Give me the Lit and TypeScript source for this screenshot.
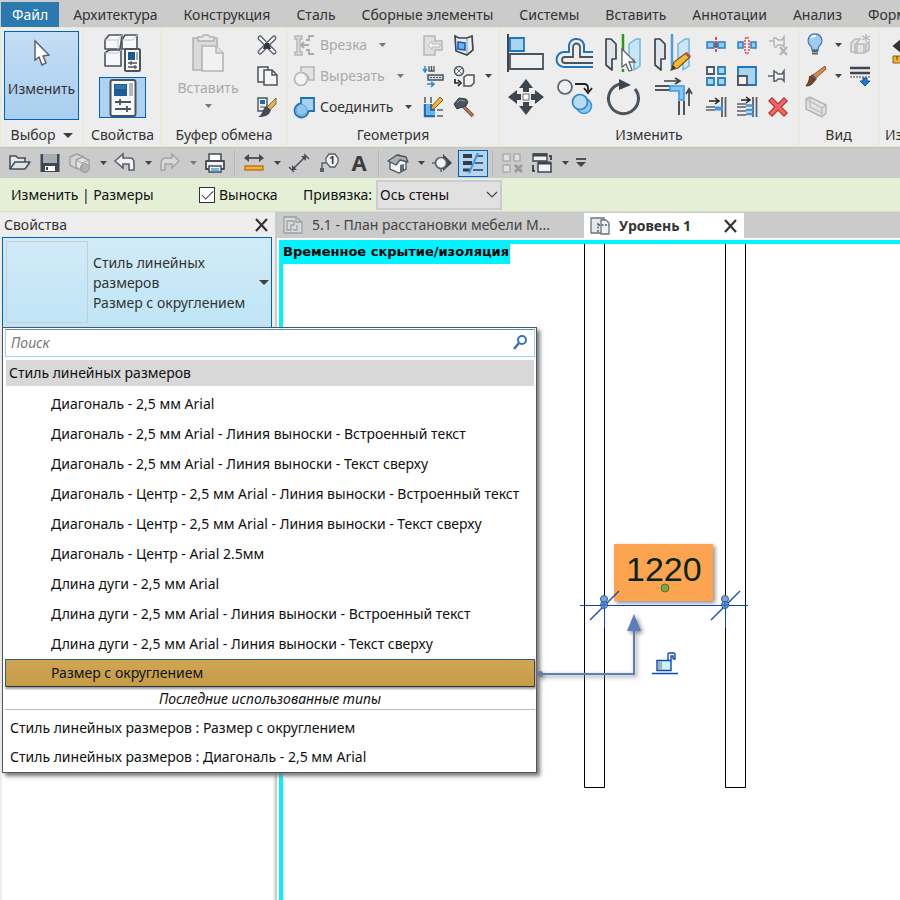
import { LitElement, html, svg, css, nothing, TemplateResult, SVGTemplateResult } from "lit";
import { customElement, property, state } from "lit/decorators.js";
import { classMap } from "lit/directives/class-map.js";

/* Icon artwork: [width, height, drawing] */
type Art = [number, number, SVGTemplateResult];

const wallHalf = svg`<path d="M2 5h5l5 5v15h-4v11l-6-5z" fill="#dfe4e9" stroke="#3d454f" stroke-width="1.7" stroke-linejoin="round"/>`;
const wallGhost = svg`<path d="M36 5h-4l-7 5v15h5v11l6-4z" fill="#c9e5f6" stroke="#6fb6e0" stroke-width="1.5" stroke-linejoin="round"/>`;

const ART: Record<string, Art> = {
  cursor: [20, 28, svg`<path d="M3 2v19l4-3 3 8 4-2-3-7 6-1z" fill="#fff" stroke="#555c66" stroke-width="1.4"/>`],
  blocks: [38, 38, svg`
    <g fill="#f6f7f8" stroke="#4b535d" stroke-width="1.6" stroke-linejoin="round">
      <path d="M1 6l4-5h13l-2 14H1z"/><path d="M18 6l3-5h12v14H18z"/><path d="M1 19l4-3h12v16H1z"/></g>
    <path d="M1 6h13l4-5M14 6v9M18 6h11l4-5M1 19h13l3-3" fill="none" stroke="#c3c8cd"/>
    <rect x="21" y="15" width="15" height="22" rx="1.5" fill="#f8f8f8" stroke="#4b535d" stroke-width="2"/>
    <path d="M24 18h7v8h-7z" fill="#1c5892"/><path d="M32 18h2v8h-2z" fill="#aaa"/>
    <path d="M24 29h9M24 33h9M27 27v4M31 31v4" stroke="#4b535d" stroke-width="1.3"/>`],
  palette: [28, 38, svg`
    <rect x="1.5" y="1" width="25" height="36" rx="2" fill="#f7f8f8" stroke="#4b535d" stroke-width="2"/>
    <path d="M5 5h13v12H5z" fill="#1f5b96"/><path d="M6 6h11v4H6z" fill="#3473ab"/>
    <path d="M20 4h4v13h-4z" fill="#b5b8bb"/>
    <path d="M6 23h16M6 30h16M11 20v6M18 27v6" stroke="#4b535d" stroke-width="1.8"/>`],
  paste: [34, 38, svg`
    <path d="M2 4h24v32H2z" fill="#dadada" stroke="#b4b4b4" stroke-width="1.6"/>
    <path d="M7 7V3h4l2-2h4l2 2h4v4z" fill="#e8e8e8" stroke="#b0b0b0" stroke-width="1.4"/>
    <path d="M11 12h14l7 7v18H11z" fill="#f1f1f1" stroke="#b4b4b4" stroke-width="1.6"/>
    <path d="M25 12v7h7" fill="#e2e2e2" stroke="#b4b4b4" stroke-width="1.4"/>`],
  cut: [22, 22, svg`
    <g stroke="#59616b" stroke-width="5" stroke-linecap="round"><path d="M4 4l14 14M18 4L4 18"/></g>
    <g stroke="#f7f7f7" stroke-width="2.400" stroke-linecap="round"><path d="M4 4l14 14M18 4L4 18"/></g>
    <path d="M8 12l1-3h4l1 3 1 3h-3l-1-1-1 1H7z" fill="#2e353d"/>`],
  copy: [22, 22, svg`<g fill="#f5f5f5" stroke="#4b535d" stroke-width="1.5"><path d="M2 2h10v15H2z"/><path d="M8 5h8l5 5v10H8z"/><path d="M16 5v5h5" fill="none"/></g>`],
  match: [22, 22, svg`
    <path d="M2 2h9v13H2z" fill="#f5f5f5" stroke="#4b535d" stroke-width="1.4"/><path d="M4 4h5v4H4z" fill="#1f6cb0"/><path d="M4 11h5" stroke="#4b535d"/>
    <path d="M20 2v6l-6 6-3-3z" fill="#e6b04e" stroke="#7c6a4a"/><path d="M10 10l5 4c-2 6-6 7-13 7 5-2 4-8 8-11z" fill="#434b55"/>`],
  cope: [22, 22, svg`<path d="M2 2h7v3H7v13h2v3H2v-3h2V5H2z" fill="#dcdcdc" stroke="#b5b5b5" stroke-width="1.4"/><path d="M8 11h8M11 8l-3 3 3 3M21 2h-5v4h-3M21 20h-5v-4h-3" fill="none" stroke="#aaa" stroke-width="1.8"/>`],
  cutGeo: [22, 22, svg`<path d="M8 2h13v13h-5A7 7 0 0 0 8 8z" fill="#e3e3e3" stroke="#b7b7b7" stroke-width="1.5"/><circle cx="8" cy="14" r="6.5" fill="#f3f3f3" stroke="#b7b7b7" stroke-width="1.7"/>`],
  join: [22, 22, svg`<path d="M8 2h13v13h-5.500A7 7 0 1 1 8 7.500z" fill="#a5d2ee" stroke="#1b72bb" stroke-width="1.8"/><circle cx="8.500" cy="14" r="5.500" fill="#8fc6ea" stroke="#5aa3d8"/>`],
  joinOff: [22, 22, svg`<path d="M2 2h11v5h7v9h-7v5H2z" fill="#dfdfdf" stroke="#b7b7b7" stroke-width="1.5"/><path d="M6 11l4-4v3h8v3h-8v3z" fill="#f4f4f4" stroke="#bbb"/>`],
  face: [22, 22, svg`<path d="M2 2l4 2 8 0 5-2 1 14-6 5-11-4z" fill="#e9edf0" stroke="#3d454f" stroke-width="1.7"/><path d="M14 5v15" stroke="#aeb5bc" stroke-width="1.5"/><path d="M5 8l7 1v7l-7-1z" fill="#6db4ea" stroke="#1462b5" stroke-width="1.6"/>`],
  beam: [22, 22, svg`<path d="M3 1v5M1 4l2 3 2-3" fill="none" stroke="#2988df" stroke-width="1.5"/><path d="M7 1v5h5V1M9.500 1v5" fill="none" stroke="#4b535d" stroke-width="1.3"/><path d="M6 10h15v5H6z" fill="#d7dade" stroke="#4b535d" stroke-width="1.5"/><path d="M8 12.500h12" stroke="#4b535d" stroke-dasharray="2 1"/><path d="M5 19h6M9 17l3 2-3 3" fill="none" stroke="#2988df" stroke-width="1.6"/>`],
  paintSplit: [22, 22, svg`<circle cx="6" cy="6" r="4.500" fill="#f2f2f2" stroke="#4b535d" stroke-width="1.5"/><path d="M3 3l6 6M9 3L3 9" stroke="#6a727b"/><path d="M2 14v4h4M5 15l3 3-3 3" fill="none" stroke="#222" stroke-width="1.700"/><path d="M11 12l3-2h7v8l-3 3h-7z" fill="#f2f2f2" stroke="#4b535d" stroke-width="1.500"/>`],
  wallJoin: [22, 22, svg`<path d="M3 8v12h10M9 8v6h4" fill="none" stroke="#1f6cb0" stroke-width="2.400"/><path d="M6 8v9h7" fill="none" stroke="#5fb3ee" stroke-width="3.400"/><path d="M3 1v6M9 1v6M15 14h6M15 20h6" stroke="#59616b" stroke-width="1.600"/><path d="M10 10l8-9 3 3-8 8-4 2z" fill="#f2b53b" stroke="#8c5a20"/>`],
  hammer: [22, 22, svg`<path d="M9 9l11 11" stroke="#7c4a35" stroke-width="3.600"/><path d="M9 9l11 11" stroke="#c18872" stroke-width="1.300"/><path d="M1 8l5-6 7 1 2 3-2 4-4 1-5 2z" fill="#4b535d" stroke="#343b44"/><path d="M4 7l3-3 5 1" stroke="#8b939b" fill="none"/>`],
  align: [38, 38, svg`<path d="M2 0v38" stroke="#3d454f" stroke-width="2"/><path d="M4 4h14v13H4z" fill="#a8d5ef" stroke="#1d76bf" stroke-width="1.800"/><path d="M4 20h33v15H4z" fill="#eef0f2" stroke="#4b535d" stroke-width="1.800"/>`],
  offset: [38, 38, svg`<path d="M38 18h-9v-5a7 7 0 0 0-7-8h-2a7 7 0 0 0-6 8v5H9a7.500 7.500 0 0 0 0 15h29" fill="none" stroke="#1d76bf" stroke-width="2"/><path d="M38 23H25V13a3.500 3.500 0 0 0-7 0v10h-8a3 3 0 0 0 0 6h28" fill="none" stroke="#4b535d" stroke-width="1.800"/>`],
  mirrorPick: [38, 38, svg`${wallHalf}${wallGhost}<path d="M19 0v30M19 35v3" stroke="#2c9a1e" stroke-width="2.500"/><path d="M18 15v18l4-3 3 7 3-1-3-8h6z" fill="#fff" stroke="#59616b" stroke-width="1.300"/>`],
  mirrorDraw: [38, 38, svg`${wallHalf}${wallGhost}<path d="M19 0v33" stroke="#4a9ee6" stroke-width="2.500"/><path d="M18 36l3-8 12-9 4 4-12 11z" fill="#f7b834" stroke="#77501d" stroke-width="1.200"/><path d="M33 19l4 4" stroke="#bc5148" stroke-width="3"/><path d="M18 36l2-5 3 3z" fill="#403830"/>`],
  move: [38, 38, svg`<path d="M20 1l7 9h-4v4h-6v-4h-4zM20 37l-7-9h4v-4h6v4h4zM2 19l9-7v4h4v6h-4v4zM38 19l-9 7v-4h-4v-6h4v-4z" fill="#3d454f"/><path d="M17 16h6v6h-6z" fill="#fff" stroke="#626a73"/>`],
  copyObj: [38, 38, svg`<circle cx="10" cy="9" r="7" fill="#f0f0f0" stroke="#59616b" stroke-width="1.700"/><path d="M20 6h9q4 0 4 4v3M29 10l4 5 4-5" fill="none" stroke="#222" stroke-width="1.800"/><circle cx="29" cy="28" r="7.500" fill="#8ec9ee" stroke="#3f92d4" stroke-width="1.600"/><circle cx="25" cy="24" r="7.500" fill="#b7dcf3" stroke="#2e85cb" stroke-width="1.700"/>`],
  rotate: [38, 38, svg`<path d="M31 11a15 15 0 1 1-15-5" fill="none" stroke="#4b535d" stroke-width="3"/><path d="M15 1l12 6-12 5z" fill="#3d454f"/>`],
  trim: [38, 38, svg`<path d="M11 3h15M22 0l5 3-5 3M36 28V13M33 16l3-5 3 5" fill="none" stroke="#3d454f" stroke-width="1.700"/><path d="M2 8h15M2 12h15M26 23v14M31 23v14" stroke="#4b535d" stroke-width="2"/><path d="M17 8h14v14h-5v-9h-9z" fill="#8bc6f3" stroke="#3b99e8" stroke-width="1.600"/>`],
  split: [22, 22, svg`<path d="M2 8h7v6H2zM13 8h7v6h-7z" fill="#8bcbee" stroke="#2b7fc0" stroke-width="1.500"/><path d="M9 11h4" stroke="#2b7fc0" stroke-width="4"/><path d="M11 3v16" stroke="#e03b31" stroke-width="1.800" stroke-dasharray="3 1"/>`],
  splitGap: [22, 22, svg`<path d="M2 8h5v6H2zM15 8h5v6h-5z" fill="#8bcbee" stroke="#2b7fc0" stroke-width="1.500"/><path d="M9 5l2-2 2 2M9 18l2 2 2-2M9 6v11M13 6v11" fill="none" stroke="#e03b31" stroke-width="1.400" stroke-dasharray="2 1"/>`],
  unpin: [22, 22, svg`<path d="M2 7h5M7 3v9M7 4h2l2 2h4l2-3v10l-2-2h-4l-2 2H7" fill="none" stroke="#b5b5b5" stroke-width="1.500"/><path d="M13 13l7 8M20 13l-7 8" stroke="#b5b5b5" stroke-width="2.400"/>`],
  array: [22, 22, svg`<g stroke-width="1.800"><path d="M2 2h7v7H2z" fill="#f2f2f2" stroke="#4b535d"/><g fill="#a8d5ef" stroke="#2b7fc0"><path d="M13 2h7v7h-7zM2 13h7v7H2zM13 13h7v7h-7z"/></g></g>`],
  scale: [22, 22, svg`<path d="M2 2h18v18H2z" fill="#a8d5ef" stroke="#1d76bf" stroke-width="1.800"/><path d="M2 11h9v9H2z" fill="#f2f2f2" stroke="#4b535d" stroke-width="1.800"/>`],
  pin: [22, 22, svg`<path d="M1 11h6M7 5v12M7 7h2l2 2h4l2-3v10l-2-2h-4l-2 2H7M17 5v12" fill="#f5f5f5" stroke="#59616b" stroke-width="1.600"/>`],
  trimOne: [22, 22, svg`<path d="M17 1v20M20.500 1v20" stroke="#59616b" stroke-width="1.800"/><path d="M4 5h9M10 2l4 3-4 3" fill="none" stroke="#222" stroke-width="1.500"/><path d="M1 11h9M1 14h9" stroke="#59616b" stroke-width="1.500"/><path d="M10 12.500h8" stroke="#3b99e8" stroke-width="4"/>`],
  trimMany: [22, 22, svg`<path d="M17 1v20M20.500 1v20" stroke="#59616b" stroke-width="1.800"/><path d="M5 4h8M10 1l4 3-4 3" fill="none" stroke="#222" stroke-width="1.500"/><path d="M1 8h9M1 11h9M1 15h9M1 19h9" stroke="#59616b" stroke-width="1.500"/><path d="M10 9.500h7M10 14h7M10 18h7" stroke="#3b99e8" stroke-width="2.600"/>`],
  del: [22, 22, svg`<path d="M5 5l12 12M17 5L5 17" stroke="#b52c2c" stroke-width="5.600" stroke-linecap="square"/><path d="M5 5l12 12M17 5L5 17" stroke="#f26560" stroke-width="3.400" stroke-linecap="square"/>`],
  bulb: [22, 22, svg`<path d="M6.500 13C0 7 4 0 10 0s10 7 3.500 13l-.5 3H7z" fill="#9fcdf0" stroke="#3b79b4" stroke-width="1.300"/><path d="M6 4q2-3 5-2" stroke="#fff" stroke-width="2" fill="none"/><path d="M7 17h6M7 19.500h6" stroke="#5b636c" stroke-width="2"/>`],
  displace: [22, 22, svg`<path d="M2 9l4-4h5l-3 4v9H2zM6 10h9v9H6zM17 10l3-2v8l-3 2z" fill="#e4e4e4" stroke="#b9b9b9" stroke-width="1.500"/><path d="M17 0v8M13 2l8 4M21 2l-8 4" stroke="#b5b5b5" stroke-width="1.300"/>`],
  brush: [22, 22, svg`<path d="M20 1l1 3-10 9-3-3z" fill="#d98a53" stroke="#8d5731"/><path d="M7 9l5 5-2 2-5-4z" fill="#555d66"/><path d="M5 11l5 4q-3 6-9 6 3-3 4-10z" fill="#7c4420" stroke="#5c3015"/>`],
  lines: [22, 22, svg`<path d="M1 3h20M1 8h20" stroke="#3d454f" stroke-width="2.400"/><path d="M1 12h20" stroke="#3d454f" stroke-width="1.200" stroke-dasharray="2 1"/><path d="M14 13h4v3h3l-5 5-5-5h3z" fill="#1b7ad0" stroke="#0e539b"/>`],
  box: [22, 22, svg`<path d="M1 3l4-2 16 8v8l-4 4L1 13z" fill="#e2e2e2" stroke="#b3b3b3" stroke-width="1.400"/><path d="M1 3l16 9 4-3M17 12v9M5 1v10l12 6" fill="none" stroke="#b9b9b9" stroke-width="1.200"/>`],
  measureBig: [36, 38, svg`<path d="M1 12h20M7 7l-6 5 6 5z" stroke="#333" stroke-width="2" fill="#333"/><path d="M0 22h30v7H0z" fill="#f0b23a" stroke="#8a6014"/><path d="M4 22v4M9 22v4" stroke="#5b3f10"/>`],
  dimSmall: [22, 22, svg`<path d="M1 6l7 7 10-8M8 6v7" fill="none" stroke="#777e86" stroke-width="2.500"/>`],
  open: [24, 24, svg`<path d="M2 18V5h6l2 2h7v4" fill="#e4e7ea" stroke="#444c56" stroke-width="1.500"/><path d="M2 18l5-7h15l-5 7z" fill="#dfe4e8" stroke="#444c56" stroke-width="1.500" stroke-linejoin="round"/>`],
  save: [24, 24, svg`<path d="M2.500 3h19v18h-19z" fill="#3f4751"/><path d="M5 3h14v9H5z" fill="#a6adb4"/><path d="M7 15h10v5H7z" fill="#fff"/><path d="M8 16h2v3H8z" fill="#3f4751"/>`],
  cubes: [24, 24, svg`<path d="M2 6l7-3 7 3v8l-7 4-7-4z" fill="#d6d6d6" stroke="#a0a0a0" stroke-width="1.400"/><path d="M8 9l6-3 7 3v7l-7 4-6-4z" fill="#e2e2e2" stroke="#a0a0a0" stroke-width="1.400"/><circle cx="17" cy="17" r="4.500" fill="#b3b3b3" stroke="#989898"/><path d="M8 9l6 3 7-3M14 12v7" fill="none" stroke="#a0a0a0"/>`],
  undo: [24, 24, svg`<path d="M2 10l8-7v4h7q4 0 4 5v7h-5v-6h-6v4z" fill="#f1f3f5" stroke="#59616b" stroke-width="1.600"/>`],
  redo: [24, 24, svg`<path d="M21 10l-7-7v4H8q-5 0-5 5v7h4v-6h7v4z" fill="#d9d9d9" stroke="#a4a4a4" stroke-width="1.500"/>`],
  print: [24, 24, svg`<path d="M6 3h12v8H6z" fill="#fff" stroke="#444c56" stroke-width="1.500"/><path d="M3 10h18v8H3z" fill="#f0f2f4" stroke="#444c56" stroke-width="1.800" stroke-linejoin="round"/><path d="M6 15h12v6H6z" fill="#fff" stroke="#444c56" stroke-width="1.500"/><path d="M8 17h8v3H8z" fill="#6cb6ec"/>`],
  measure: [24, 24, svg`<path d="M4 7h16" stroke="#444c56" stroke-width="1.800"/><path d="M7 3L2 7l5 4zM17 3l5 4-5 4z" fill="#444c56"/><path d="M3 15h18v4H3z" fill="#f0b23a" stroke="#c07b10" stroke-width="1.400"/>`],
  aligned: [24, 24, svg`<path d="M6 18L18 6" stroke="#444c56" stroke-width="1.500"/><path d="M2 16l5 5M17 3l5 5" stroke="#444c56" stroke-width="1.300"/><path d="M5 14v5h5zM14 5h5v5z" fill="#444c56"/>`],
  tag: [24, 24, svg`<path d="M12 3h6l3 4v4l-3 5h-5l-4-5V7z" fill="#f1f1f1" stroke="#59616b" stroke-width="1.300"/><path d="M9 12H5v7" fill="none" stroke="#59616b" stroke-width="1.500"/><path d="M3 17h4v4H3z" fill="#59616b"/><text x="15" y="13" font-size="10" font-weight="700" text-anchor="middle" fill="#333">1</text>`],
  letter: [24, 24, svg`<text x="12" y="20" font-size="22" font-weight="700" text-anchor="middle" fill="#3d3d3d">А</text>`],
  house: [24, 24, svg`<path d="M4 11v7l9 4 7-4V9L13 4z" fill="#f4f5f6" stroke="#4b535d" stroke-width="1.300"/><path d="M2 10l9-6 9 2 2 5-8-2-4 5z" fill="#a9b0b7" stroke="#4b535d" stroke-width="1.300" stroke-linejoin="round"/><path d="M14 14l4-1v6l-4 2z" fill="#626a73"/>`],
  section: [24, 24, svg`<path d="M12 3l9 9-9 8z" fill="#3d454f"/><circle cx="10" cy="12" r="5.500" fill="#f1f1f1" stroke="#59616b" stroke-width="1.700"/><path d="M1 12h4M10 18v3" stroke="#59616b" stroke-width="1.500"/>`],
  thin: [24, 24, svg`<path d="M2 5h9M2 12h9" stroke="#333b45" stroke-width="4"/><path d="M2 19h8" stroke="#333b45" stroke-width="3"/><path d="M15 5h7M14 12h8M12 19h10" stroke="#333b45" stroke-width="1.300"/><path d="M8 22L17 2" stroke="#3b99e8" stroke-width="2"/>`],
  closeHidden: [24, 24, svg`<g fill="#e0e0e0" stroke="#adadad" stroke-width="1.500"><path d="M3 3h7v7H3zM14 3h6v7h-6zM3 14h7v7H3z"/></g><path d="M15 14l7 7M22 14l-7 7" stroke="#999" stroke-width="3"/>`],
  switchWin: [24, 24, svg`<path d="M3 3h14v7H3z" fill="#f2f2f2" stroke="#3d454f" stroke-width="1.400"/><path d="M3 4h14" stroke="#3d454f" stroke-width="3"/><path d="M8 12h13v9H8z" fill="#f2f2f2" stroke="#3d454f" stroke-width="1.500"/><path d="M8 12h13" stroke="#3d454f" stroke-width="3"/><path d="M19 5h2v4M5 20H3v-6" fill="none" stroke="#222" stroke-width="1.500"/>`],
  more: [12, 12, svg`<path d="M1 2h10" stroke="#444" stroke-width="1.800"/><path d="M1 5h10l-5 5z" fill="#444"/>`],
  caret: [8, 4, svg`<path d="M1 0h7L4.500 4z" fill="#444"/>`],
  caretOff: [8, 4, svg`<path d="M1 0h7L4.500 4z" fill="#777"/>`],
  caretWide: [10, 5, svg`<path d="M0 0h10L5 5z" fill="#3d3d3d"/>`],
  chevron: [12, 8, svg`<path d="M1 1l5 5 5-5" fill="none" stroke="#444" stroke-width="1.200"/>`],
  close: [14, 14, svg`<path d="M1 1l11 12M12 1L1 13" stroke="#333" stroke-width="2.200"/>`],
  sheet: [20, 18, svg`<path d="M1 1h12l6 5v11H1z" fill="#d7d9da" stroke="#9da1a4" stroke-width="1.300"/><path d="M4 5h7v4H8v5H4zM13 1v5h6M14 9v5h-4" fill="none" stroke="#9da1a4" stroke-width="1.300"/>`],
  plan: [20, 18, svg`<path d="M1 1h13v15H1z" fill="#e4e9ee" stroke="#6b747d" stroke-width="1.300"/><path d="M11 3h5l3 3v11h-8z" fill="#f0f3f5" stroke="#6b747d" stroke-width="1.300"/><path d="M8 6v11M8 8h11" stroke="#4b535d" stroke-width="1.300" stroke-dasharray="2 1.500"/>`],
  search: [16, 16, svg`<circle cx="10" cy="5" r="4" fill="none" stroke="#3573bb" stroke-width="2"/><path d="M7 8l-5 6" stroke="#3573bb" stroke-width="2.600"/>`],
};

const icon = (name: string): TemplateResult => {
  const [w, h, art] = ART[name];
  return html`<svg class="ic" width=${w} height=${h} viewBox="0 0 ${w} ${h}" aria-hidden="true">${art}</svg>`;
};

const base = css`
  :host { display: block; font-family: "Noto Sans", "Open Sans", sans-serif; font-size: 14px; line-height: 20px; color: #333; }
  * { box-sizing: border-box; }
  button { font: inherit; color: inherit; background: none; border: 0; padding: 0; margin: 0; display: flex; align-items: center; justify-content: center; white-space: nowrap; }
  .ic { display: block; flex: none; overflow: visible; }
`;

@customElement("ribbon-panel")
class RibbonPanel extends LitElement {
  @property() label = "";
  @property({ type: Boolean }) menu = false;
  static styles = [base, css`
    :host { display: flex; flex-direction: column; flex: none; height: 120px; border: 1px solid #e1ebce; border-width: 1px 0 1px 1px; background: #ededed; }
    .body { flex: 1; display: flex; padding-top: 6px; }
    .label { display: flex; align-items: center; justify-content: center; gap: 8px; height: 22px; white-space: nowrap; }
  `];
  render() {
    return html`<div class="body"><slot></slot></div>
      <div class="label">${this.label}${this.menu ? icon("caretWide") : nothing}</div>`;
  }
}

@customElement("app-ribbon")
class AppRibbon extends LitElement {
  static styles = [base, css`
    .tabs { display: flex; height: 27px; padding: 2px 0 0 1px; background: #cbcbcb; overflow: hidden; }
    .tab { flex: none; padding: 0 13px; height: 25px; }
    .tab.file { padding: 0 11px; margin-right: 1px; background: #2a7ab0; color: #fff; }
    .panels { display: flex; background: #ededed; overflow: hidden; }
    .select { width: 83px; }
    .props { width: 78px; }
    .clip { width: 125px; }
    .geo { width: 213px; }
    .mod { width: 299px; }
    .view { width: 80px; }
    .measure { width: 80px; }
    .modify { width: 75px; height: 89px; margin: -3px 0 0 3px; flex-direction: column; justify-content: flex-start; padding-top: 7px; gap: 12px; border: 1px solid #0061c5; background: linear-gradient(#c4def5, #a9ceef); }
    .stack { display: flex; flex-direction: column; align-items: center; gap: 5px; flex: 1; }
    .stack .on { width: 47px; height: 41px; border: 1px solid #0061c5; background: #aed2f2; }
    .paste { width: 78px; margin-left: 7px; flex-direction: column; justify-content: flex-start; gap: 6px; color: #aaa; align-self: flex-start; }
    .small { display: grid; grid-template-columns: repeat(var(--cols, 1), auto); gap: 9px; align-content: start; align-items: center; }
    .small button { height: 22px; }
    .small.one { margin-left: 9px; }
    .small.two { --cols: 3; }
    .small.three { --cols: 3; margin-left: 14px; }
    .small.viewgrid { --cols: 3; column-gap: 7px; margin-left: 6px; }
    .wide { display: flex; flex-direction: column; gap: 9px; width: 120px; margin: 0 9px 0 6px; }
    .wide button { height: 22px; gap: 5px; justify-content: flex-start; }
    .wide .ic:last-child { margin-left: 6px; }
    .off { color: #aaa; }
    .big { display: grid; grid-template-columns: repeat(4, 38px); gap: 6px 11px; align-content: start; margin-left: 6px; }
    .cutoff { display: flex; flex-direction: column; gap: 22px; margin-left: 14px; }
  `];
  private tool(name: string, title: string) {
    return html`<button title=${title} aria-label=${title}>${icon(name)}</button>`;
  }
  private drop(off = false) {
    return html`<button aria-label="Ещё">${icon(off ? "caretOff" : "caret")}</button>`;
  }
  render() {
    const tabs = ["Архитектура", "Конструкция", "Сталь", "Сборные элементы", "Системы", "Вставить", "Аннотации", "Анализ", "Формы и генплан"];
    return html`
      <nav class="tabs">
        <button class="tab file">Файл</button>
        ${tabs.map((t) => html`<button class="tab">${t}</button>`)}
      </nav>
      <div class="panels">
        <ribbon-panel class="select" label="Выбор" menu>
          <button class="modify">${icon("cursor")}<span>Изменить</span></button>
        </ribbon-panel>
        <ribbon-panel class="props" label="Свойства">
          <div class="stack">
            ${this.tool("blocks", "Свойства типа")}
            <button class="on" aria-label="Свойства">${icon("palette")}</button>
          </div>
        </ribbon-panel>
        <ribbon-panel class="clip" label="Буфер обмена">
          <button class="paste" disabled>${icon("paste")}<span>Вставить</span>${icon("caretOff")}</button>
          <div class="small one">${this.tool("cut", "Вырезать в буфер")}${this.tool("copy", "Копировать в буфер")}${this.tool("match", "Копирование свойств")}</div>
        </ribbon-panel>
        <ribbon-panel class="geo" label="Геометрия">
          <div class="wide">
            <button class="off">${icon("cope")}<span>Врезка</span>${icon("caretOff")}</button>
            <button class="off">${icon("cutGeo")}<span>Вырезать</span>${icon("caretOff")}</button>
            <button>${icon("join")}<span>Соединить</span>${icon("caret")}</button>
          </div>
          <div class="small two">
            ${this.tool("joinOff", "Соединение крыш")}${this.tool("face", "Разделить грань")}<span></span>
            ${this.tool("beam", "Соединения балок")}${this.tool("paintSplit", "Краска")}${this.drop()}
            ${this.tool("wallJoin", "Соединения стен")}${this.tool("hammer", "Снос")}
          </div>
        </ribbon-panel>
        <ribbon-panel class="mod" label="Изменить">
          <div class="big">
            ${this.tool("align", "Выровнять")}${this.tool("offset", "Смещение")}${this.tool("mirrorPick", "Зеркало — выбрать ось")}${this.tool("mirrorDraw", "Зеркало — нарисовать ось")}
            ${this.tool("move", "Переместить")}${this.tool("copyObj", "Копировать")}${this.tool("rotate", "Повернуть")}${this.tool("trim", "Обрезать до угла")}
          </div>
          <div class="small three">
            ${this.tool("split", "Разделить элемент")}${this.tool("splitGap", "Разделить с зазором")}${this.tool("unpin", "Открепить")}
            ${this.tool("array", "Массив")}${this.tool("scale", "Масштаб")}${this.tool("pin", "Прикрепить")}
            ${this.tool("trimOne", "Удлинить элемент")}${this.tool("trimMany", "Удлинить элементы")}${this.tool("del", "Удалить")}
          </div>
        </ribbon-panel>
        <ribbon-panel class="view" label="Вид">
          <div class="small viewgrid">
            ${this.tool("bulb", "Скрыть на виде")}${this.drop()}${this.tool("displace", "Сместить")}
            ${this.tool("brush", "Переопределить графику")}${this.drop()}${this.tool("lines", "Вес линий")}
            ${this.tool("box", "Рамка выбора")}
          </div>
        </ribbon-panel>
        <ribbon-panel class="measure" label="Измерить">
          <div class="cutoff">${this.tool("measureBig", "Измерить")}${this.tool("dimSmall", "Размер")}</div>
        </ribbon-panel>
      </div>`;
  }
}

@customElement("quick-bar")
class QuickBar extends LitElement {
  static styles = [base, css`
    .bar { display: flex; align-items: center; gap: 6px; height: 31px; padding-left: 8px; background: #cbcbcb; border-top: 1px solid #c2c2c2; overflow: hidden; }
    button { flex: none; width: 24px; height: 27px; }
    .drop { width: 9px; }
    .on { width: 30px; margin: 0 -3px; border: 1px solid #0061c5; background: #b3d5f4; }
    .sep { flex: none; width: 1px; height: 27px; margin: 0 1px; background: #b7b7b7; }
    .last { width: 12px; }
  `];
  render() {
    const items = ["open", "save", "cubes", "v", "undo", "v", "redo", "w", "print", "|", "measure", "v", "aligned", "tag", "letter", "|", "house", "v", "section", "thin", "|", "closeHidden", "switchWin", "v"];
    return html`<div class="bar" role="toolbar">
      ${items.map((i) =>
        i === "|" ? html`<span class="sep"></span>`
        : i === "v" || i === "w" ? html`<button class="drop" aria-label="Ещё">${icon(i === "v" ? "caret" : "caretOff")}</button>`
        : html`<button class=${classMap({ on: i === "thin" })} aria-label=${i}>${icon(i)}</button>`)}
      <button class="last" aria-label="Настройка панели">${icon("more")}</button>
    </div>`;
  }
}

@customElement("options-bar")
class OptionsBar extends LitElement {
  @state() private leader = true;
  static styles = [base, css`
    .bar { display: flex; align-items: center; height: 34px; padding-left: 11px; background: #e4efd6; border-bottom: 1px solid #d8dfd0; color: #111; white-space: nowrap; }
    .title { width: 188px; }
    .check { display: flex; align-items: center; gap: 4px; width: 104px; }
    input { appearance: none; width: 16px; height: 16px; margin: 0; border: 1px solid #333; background: #fff; display: grid; place-items: center; }
    input:checked::before { content: ""; width: 10px; height: 5px; border: solid #333; border-width: 0 0 1px 1px; transform: rotate(-45deg) translate(1px, -1px); }
    .bind { width: 73px; }
    .pick { position: relative; display: flex; align-items: center; }
    select { appearance: none; font: inherit; color: inherit; width: 126px; height: 30px; padding: 0 24px 0 2px; border: 2px solid #cbcbd3; border-radius: 0; background: #e1e1e1; }
    .pick .ic { position: absolute; right: 4px; pointer-events: none; }
  `];
  render() {
    return html`<div class="bar">
      <span class="title">Изменить | Размеры</span>
      <label class="check"><input type="checkbox" .checked=${this.leader} @change=${() => (this.leader = !this.leader)}>Выноска</label>
      <label class="bind" for="bind">Привязка:</label>
      <span class="pick"><select id="bind"><option>Ось стены</option><option>Грань стены</option></select>${icon("chevron")}</span>
    </div>`;
  }
}

const STYLES = [
  "Диагональ - 2,5 мм Arial",
  "Диагональ - 2,5 мм Arial - Линия выноски - Встроенный текст",
  "Диагональ - 2,5 мм Arial - Линия выноски - Текст сверху",
  "Диагональ - Центр - 2,5 мм Arial - Линия выноски - Встроенный текст",
  "Диагональ - Центр - 2,5 мм Arial - Линия выноски - Текст сверху",
  "Диагональ - Центр - Arial 2.5мм",
  "Длина дуги - 2,5 мм Arial",
  "Длина дуги - 2,5 мм Arial - Линия выноски - Встроенный текст",
  "Длина дуги - 2,5 мм Arial - Линия выноски - Текст сверху",
  "Размер с округлением",
];

@customElement("properties-palette")
class PropertiesPalette extends LitElement {
  @state() private chosen = STYLES.length - 1;
  static styles = [base, css`
    :host { flex: none; width: 277px; display: flex; position: relative; z-index: 1; border-right: 2px solid #cbcbcb; background: #ededed; }
    .frame { flex: 1; display: flex; flex-direction: column; min-width: 0; }
    header { display: flex; align-items: center; justify-content: space-between; height: 25px; padding: 0 6px 0 4px; }
    .type { flex: none; width: 270px; height: 91px; margin-left: 2px; padding: 3px 2px 3px 3px; align-items: flex-start; justify-content: flex-start; text-align: left; white-space: normal; border: 1px solid #0061c5; background: linear-gradient(#d2ebf8, #bfe5f6); }
    .preview { flex: none; width: 82px; height: 82px; margin-right: 5px; border: 1px solid #c8cdd0; }
    .name { flex: 1; padding-top: 12px; }
    .name span { display: block; width: 130px; }
    .name .second { width: auto; white-space: nowrap; }
    .type .ic { align-self: center; }
    .rest { flex: 1; margin: 0 2px; background: #fff; }
    .popup { position: absolute; left: 2px; top: 115px; width: 535px; padding: 1px 1px 0 2px; border: 1px solid #555; background: #fff; box-shadow: 3px 3px 4px #777; color: #111; }
    .search { display: flex; align-items: center; height: 28px; margin: 0 0 3px; padding-right: 6px; border: 1px solid #9fd0e8; border-top-color: #4c8fc0; }
    .search input { flex: 1; min-width: 0; border: 0; outline: 0; padding: 0 5px; font: inherit; font-style: italic; background: none; }
    .search input::placeholder { color: #777; opacity: 1; }
    .group { height: 26px; line-height: 26px; margin: 0 1px 3px; padding-left: 3px; background: #d8d8d8; }
    .row { width: 100%; height: 30px; justify-content: flex-start; padding-left: 46px; }
    .row.on { height: 28px; padding-left: 45px; border: 1px solid #1f4a78; border-color: #2b5c8e #444 #333 #2b5c8e; background: linear-gradient(#d0a653, #c49b47); box-shadow: 1px 2px 2px #999; }
    .recent-title { height: 22px; line-height: 20px; margin-top: 1px; text-align: center; font-style: italic; border: solid #bbb; border-width: 1px 0; }
    .recent { width: 100%; height: 29px; justify-content: flex-start; padding-left: 5px; }
    .recents { padding: 3px 0 1px; }
  `];
  render() {
    return html`<div class="frame">
        <header><span>Свойства</span><button aria-label="Закрыть">${icon("close")}</button></header>
        <button class="type">
          <span class="preview"></span>
          <span class="name"><span>Стиль линейных размеров</span><span class="second">${STYLES[this.chosen]}</span></span>
          ${icon("caretWide")}
        </button>
        <div class="rest"></div>
      </div>
      <div class="popup">
        <div class="search"><input type="text" placeholder="Поиск" aria-label="Поиск">${icon("search")}</div>
        <div class="group">Стиль линейных размеров</div>
        ${STYLES.map((s, i) => html`<button class=${classMap({ row: true, on: i === this.chosen })} @click=${() => (this.chosen = i)}>${s}</button>`)}
        <div class="recent-title">Последние использованные типы</div>
        <div class="recents">
          <button class="recent">Стиль линейных размеров : Размер с округлением</button>
          <button class="recent">Стиль линейных размеров : Диагональ - 2,5 мм Arial</button>
        </div>
      </div>`;
  }
}

@customElement("drawing-view")
class DrawingView extends LitElement {
  static styles = [base, css`
    :host { flex: 1; min-width: 0; display: flex; flex-direction: column; background: #fff; }
    .tabs { display: flex; height: 26px; background: #cbcbcb; }
    .tab { display: flex; align-items: center; gap: 9px; padding: 0 6px; width: 160px; white-space: nowrap; }
    .tab.idle { width: 307px; color: #444; }
    .tab.live { margin-top: 1px; background: #fff; font-weight: 700; }
    .tab button { margin-left: auto; }
    .sheet { flex: 1; position: relative; margin: 2px 0 0 2px; border: solid #00f4ff; border-width: 4px 0 0 4px; background: #fff; overflow: hidden; }
    .mode { position: absolute; left: 0; top: -2px; padding: 0 1px 0 0; height: 22px; background: #00f4ff; color: #000; font: 700 13px/20px "DejaVu Sans", sans-serif; white-space: nowrap; }
    .canvas { position: absolute; inset: 0; width: 100%; height: 100%; }
    .value { font-family: "Liberation Sans", Arial, sans-serif; font-size: 34px; fill: #06240c; }
    .note { filter: drop-shadow(2px 2px 2px #888); }
  `];
  private grip(x: number) {
    return svg`<path d="M${x - 14} 376l29-29" stroke="#0f45b8" stroke-width="1.300"/>
      <path d="M${x + 0.5} 361v23" stroke="#0f45b8"/>
      <g fill="#78a5dc" stroke="#315a92"><circle cx=${x} cy="355" r="3.500"/><circle cx=${x} cy="361" r="3.500"/></g>
      <path d="M${x - 3} 361h7M${x} 358v7" stroke="#1756d8"/>`;
  }
  render() {
    return html`
      <div class="tabs">
        <div class="tab idle">${icon("sheet")}<span>5.1 - План расстановки мебели М...</span></div>
        <div class="tab live">${icon("plan")}<span>Уровень 1</span><button aria-label="Закрыть вид">${icon("close")}</button></div>
      </div>
      <div class="sheet">
        <svg class="canvas" role="img" aria-label="План">
          <path d="M301.500 0V543.500H321.500V0M442.500 0V543.500H462.500V0" fill="none" stroke="#000"/>
          <rect class="note" x="331" y="300" width="99" height="57" fill="#fda450"/>
          <text class="value" x="343" y="337">1220</text>
          <circle cx="382" cy="344" r="4" fill="#80a145" stroke="#4f7a2c"/>
          <path d="M297 361.500H465" stroke="#0f45b8"/>
          ${this.grip(321)}${this.grip(442)}
          <g class="note"><path d="M252 430H351V384" fill="none" stroke="#5b7fbb" stroke-width="2"/><path d="M351 370l7 17h-14z" fill="#5b7fbb"/><circle cx="257" cy="430" r="3" fill="#5b7fbb"/></g>
          <path d="M374 416.500h14v10h-14z" fill="#c4f5f7" stroke="#0f45b8" stroke-width="1.400"/><path d="M375 417h4v9h-4z" fill="#9ab4b8"/>
          <path d="M385 416v-6l1-1h5l1 1v5h-2M388 416v-4h2v3M369 429.500h26" fill="none" stroke="#0f45b8" stroke-width="1.400"/>
        </svg>
        <span class="mode">Временное скрытие/изоляция</span>
      </div>`;
  }
}

@customElement("app-root")
class AppRoot extends LitElement {
  static styles = [base, css`
    :host { min-height: 100vh; display: flex; flex-direction: column; overflow: hidden; background: #cbcbcb; }
    main { flex: 1; display: flex; min-height: 640px; }
  `];
  render() {
    return html`<app-ribbon></app-ribbon><quick-bar></quick-bar><options-bar></options-bar>
      <main><properties-palette></properties-palette><drawing-view></drawing-view></main>`;
  }
}
